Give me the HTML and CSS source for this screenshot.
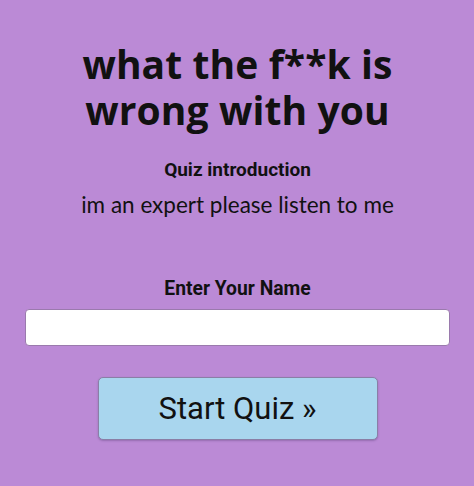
FILE: index.html
```html
<!DOCTYPE html>
<html>
<head>
<meta charset="utf-8">
<link rel="stylesheet" href="styles.css">
</head>
<body>
<main class="quiz">
  <h1 class="title">what the f**k is wrong with you</h1>
  <h2 class="subtitle">Quiz introduction</h2>
  <p class="intro">im an expert please listen to me</p>
  <form class="form">
    <label class="label" for="name">Enter Your Name</label>
    <input class="name-input" id="name" type="text">
    <button class="start" type="button">Start Quiz »</button>
  </form>
</main>
</body>
</html>
```
FILE: styles.css
```css
html, body {
  margin: 0;
  padding: 0;
  background: #bb8ad6;
}
body {
  width: 474px;
  height: 486px;
  overflow: hidden;
}
.quiz {
  display: flex;
  flex-direction: column;
  align-items: center;
  padding: 41px 24px 0 25px;
  color: #111;
}
.title {
  margin: 0;
  width: 330px;
  text-align: center;
  font-family: "Open Sans", sans-serif;
  font-weight: 700;
  font-size: 39px;
  line-height: 46px;
  letter-spacing: 0.1px;
}
.subtitle {
  margin: 25px 0 0;
  font-family: Roboto, sans-serif;
  font-weight: 700;
  font-size: 19px;
  line-height: 24px;
}
.intro {
  margin: 9px 0 0;
  font-family: Lato, sans-serif;
  font-weight: 400;
  font-size: 22.5px;
  line-height: 28px;
}
.form {
  display: flex;
  flex-direction: column;
  align-items: center;
  width: 100%;
  margin-top: 58px;
}
.label {
  font-family: Roboto, sans-serif;
  font-weight: 700;
  font-size: 19.3px;
  line-height: 24px;
}
.name-input {
  box-sizing: border-box;
  width: 425px;
  height: 37px;
  margin-top: 8px;
  border: 1px solid #9a7aad;
  border-radius: 4px;
  background: #fff;
}
.start {
  box-sizing: border-box;
  width: 280px;
  height: 63px;
  margin-top: 31px;
  background: #a9d6ee;
  border: 1px solid #8a7fa6;
  border-radius: 5px;
  box-shadow: 0 1px 2px rgba(60, 40, 90, 0.3);
  font-family: Roboto, sans-serif;
  font-size: 31px;
  color: #111;
}
```
